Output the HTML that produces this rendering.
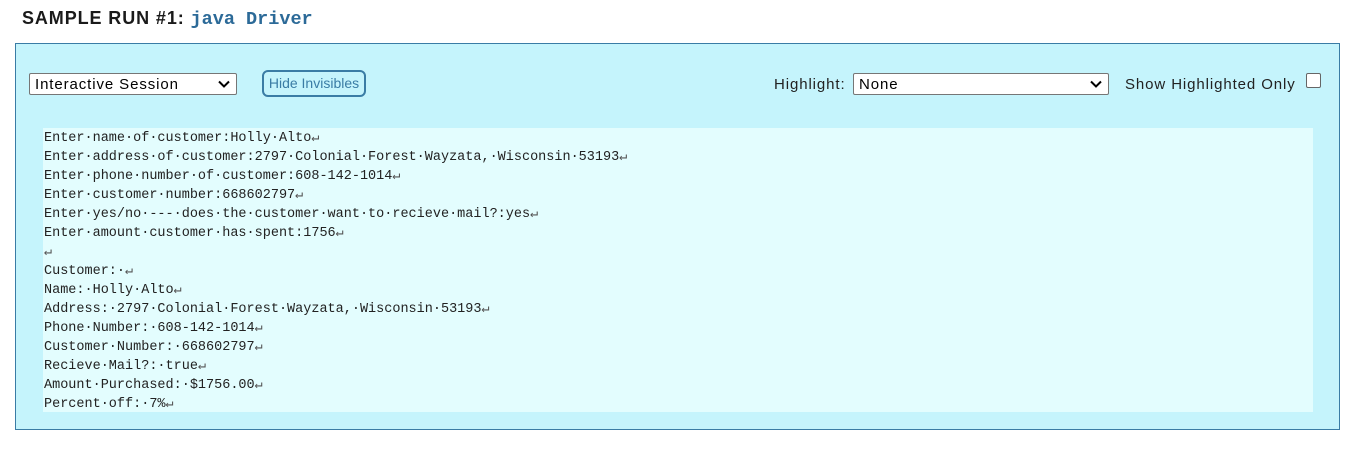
<!DOCTYPE html>
<html><head><meta charset="utf-8"><style>
body{margin:0;width:1354px;height:458px;background:#fff;position:relative;overflow:hidden;font-family:"Liberation Sans",sans-serif;}
h2{position:absolute;left:22px;top:8px;margin:0;font-size:18px;letter-spacing:0.9px;font-weight:bold;color:#1a1a1a;white-space:nowrap;}
h2 code{font-family:"Liberation Mono",monospace;color:#2c6a98;font-size:18.5px;letter-spacing:0;}
.panel{position:absolute;left:15px;top:43px;width:1323px;height:385px;background:#c5f4fc;border:1px solid #3a7ca5;}
.sel{position:absolute;background:#fff;border:1px solid #767676;border-radius:2px;height:20px;font-size:15px;letter-spacing:0.9px;line-height:21px;padding-left:5px;box-sizing:border-box;color:#000;}
.sel svg{position:absolute;right:6px;top:6px;}
.btn{position:absolute;left:246px;top:26px;width:104px;height:27px;box-sizing:border-box;border:2px solid #3a7ca5;border-radius:6px;font-size:14px;color:#3a7ca5;line-height:23px;text-align:center;}
.lbl{position:absolute;font-size:15px;letter-spacing:0.9px;color:#222;top:32px;}
.cb{position:absolute;left:1290px;top:29px;width:13px;height:13px;border:1px solid #666;border-radius:2px;background:#fff;}
.code{position:absolute;left:27px;top:84px;width:1270px;height:284px;background:#e3fdfe;}
pre{margin:0;padding-left:1px;padding-top:1px;font-family:"Liberation Mono",monospace;font-size:13.5px;line-height:19px;color:#222;}
.r{color:#555;}
</style></head><body>
<h2>SAMPLE RUN #1: <code>java Driver</code></h2>
<div class="panel">
<div class="sel" style="left:13px;top:29px;width:208px;height:22px">Interactive Session<svg width="12" height="8" viewBox="0 0 12 8"><path d="M1 1.5L6 6.5L11 1.5" fill="none" stroke="#000" stroke-width="2"/></svg></div>
<div class="btn">Hide Invisibles</div>
<div class="lbl" style="left:758px">Highlight:</div>
<div class="sel" style="left:837px;top:29px;width:256px;height:22px">None<svg width="12" height="8" viewBox="0 0 12 8"><path d="M1 1.5L6 6.5L11 1.5" fill="none" stroke="#000" stroke-width="2"/></svg></div>
<div class="lbl" style="left:1109px">Show Highlighted Only</div>
<div class="cb"></div>
<div class="code"><pre>Enter·name·of·customer:Holly·Alto<span class="r">↵</span>
Enter·address·of·customer:2797·Colonial·Forest·Wayzata,·Wisconsin·53193<span class="r">↵</span>
Enter·phone·number·of·customer:608-142-1014<span class="r">↵</span>
Enter·customer·number:668602797<span class="r">↵</span>
Enter·yes/no·---·does·the·customer·want·to·recieve·mail?:yes<span class="r">↵</span>
Enter·amount·customer·has·spent:1756<span class="r">↵</span>
<span class="r">↵</span>
Customer:·<span class="r">↵</span>
Name:·Holly·Alto<span class="r">↵</span>
Address:·2797·Colonial·Forest·Wayzata,·Wisconsin·53193<span class="r">↵</span>
Phone·Number:·608-142-1014<span class="r">↵</span>
Customer·Number:·668602797<span class="r">↵</span>
Recieve·Mail?:·true<span class="r">↵</span>
Amount·Purchased:·$1756.00<span class="r">↵</span>
Percent·off:·7%<span class="r">↵</span></pre></div>
</div>
</body></html>
